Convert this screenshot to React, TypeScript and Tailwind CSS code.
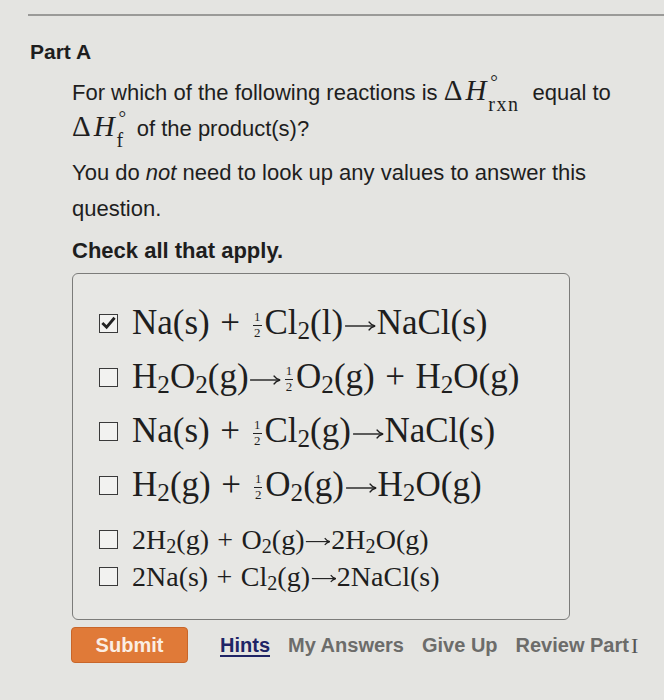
import React from "react";

const sans = { fontFamily: "'Liberation Sans', Arial, sans-serif" };
const serif = { fontFamily: "'Liberation Serif', 'Times New Roman', serif" };

const Sub = ({ children }: { children: React.ReactNode }) => (
  <sub className="text-[0.72em] relative top-[0.2em] align-baseline leading-none">{children}</sub>
);

const Half = () => (
  <span className="inline-flex flex-col items-center align-middle ml-[0.2em] mr-[0.22em] text-[0.37em] leading-none relative -top-[0.08em]">
    <span className="px-[1px]">1</span>
    <span className="w-full border-t border-[#222] my-[1px]" />
    <span className="px-[1px]">2</span>
  </span>
);

// long thin reaction arrow
const Arrow = () => (
  <svg viewBox="0 0 30 12" className="inline-block w-[0.92em] h-[0.4em] align-middle mx-[0.02em]">
    <path d="M1 6 H28" stroke="#1e1e1e" strokeWidth="1.3" />
    <path d="M23 2 Q25 5 29 6 Q25 7 23 10" fill="none" stroke="#1e1e1e" strokeWidth="1.3" />
  </svg>
);

const Plus = () => <span className="mx-[0.3em]">+</span>;

const Checkbox = ({ checked }: { checked?: boolean }) => (
  <span className="w-[19px] h-[19px] border-[1.5px] border-[#3a3a3a] bg-[#f2f2f0] flex items-center justify-center shrink-0">
    {checked && (
      <svg viewBox="0 0 16 16" className="w-[15px] h-[15px]">
        <path d="M2.5 8.5 L6 12 L13.5 3" fill="none" stroke="#222" strokeWidth="3" strokeLinecap="square" />
      </svg>
    )}
  </span>
);

// ΔH with a degree sign over a subscript; the scripts hang off a fixed-width slot
const DeltaH = ({ sub, w }: { sub: string; w: string }) => (
  <span style={serif} className="text-[29px] leading-none whitespace-nowrap">
    <span className="mr-[3px]">Δ</span>
    <i className="mr-[2px]">H</i>
    <span className={`relative inline-block h-[0.7em] ${w}`}>
      <span className="absolute left-[2px] -top-[8px] text-[19px] leading-none">°</span>
      <span className="absolute left-0 top-[14px] text-[20px] tracking-[1.5px] leading-none">{sub}</span>
    </span>
  </span>
);

const options: { el: React.ReactNode; big: boolean; checked?: boolean }[] = [
  {
    checked: true,
    big: true,
    el: (
      <>
        Na(s)<Plus />
        <Half />Cl<Sub>2</Sub>(l)<Arrow />NaCl(s)
      </>
    ),
  },
  {
    big: true,
    el: (
      <>
        H<Sub>2</Sub>O<Sub>2</Sub>(g)<Arrow />
        <Half />O<Sub>2</Sub>(g)<Plus />H<Sub>2</Sub>O(g)
      </>
    ),
  },
  {
    big: true,
    el: (
      <>
        Na(s)<Plus />
        <Half />Cl<Sub>2</Sub>(g)<Arrow />NaCl(s)
      </>
    ),
  },
  {
    big: true,
    el: (
      <>
        H<Sub>2</Sub>(g)<Plus />
        <Half />O<Sub>2</Sub>(g)<Arrow />H<Sub>2</Sub>O(g)
      </>
    ),
  },
  {
    big: false,
    el: (
      <>
        2H<Sub>2</Sub>(g)<Plus />O<Sub>2</Sub>(g)<Arrow />2H<Sub>2</Sub>O(g)
      </>
    ),
  },
  {
    big: false,
    el: (
      <>
        2Na(s)<Plus />Cl<Sub>2</Sub>(g)<Arrow />2NaCl(s)
      </>
    ),
  },
];

export default function App() {
  return (
    <div className="w-[664px] h-[700px] bg-[#e4e4e1] text-[#1e1e1e] overflow-hidden" style={sans}>
      <div className="pt-[14px] pl-[28px]">
        <div className="h-[2px] bg-[#9a9a98]" />
      </div>

      <div className="pl-[30px] pt-[24px]">
        <h2 className="text-[21px] font-bold leading-[24px]">Part A</h2>
      </div>

      <div className="pl-[72px] pr-[20px] pt-[11px] text-[22px] leading-[36px]">
        <p className="whitespace-nowrap">
          For which of the following reactions is <DeltaH sub="rxn" w="w-[38px]" /> equal to
          <br />
          <DeltaH sub="f" w="w-[14px]" /> of the product(s)?
        </p>

        <p className="mt-[8px]">
          You do <i>not</i> need to look up any values to answer this
          <br />
          question.
        </p>

        <p className="mt-[6px] font-bold">Check all that apply.</p>
      </div>

      <div className="ml-[72px] w-[498px] mt-[4px] border-[1.5px] border-[#7c7c7a] rounded-[6px] bg-[#e7e7e4] pl-[26px] pt-[22px] pb-[24px]">
        {options.map((o, i) => (
          <div
            key={i}
            className={`flex items-center gap-[14px] ${o.big ? "h-[54px] text-[35px]" : "h-[37px] text-[28px]"} ${i === 4 ? "mt-[9px]" : ""}`}
          >
            <Checkbox checked={o.checked} />
            <span style={serif} className="whitespace-nowrap leading-none">
              {o.el}
            </span>
          </div>
        ))}
      </div>

      <div className="ml-[71px] mt-[7px] flex items-center text-[20px] font-bold">
        <button className="w-[117px] h-[36px] rounded-[4px] bg-[#e07a38] border border-[#c8662a] text-[#fbeee4]">
          Submit
        </button>
        <span className="ml-[32px] text-[#1f2466] underline underline-offset-[3px] decoration-2">Hints</span>
        <span className="ml-[18px] text-[#6c6c6a]">My Answers</span>
        <span className="ml-[18px] text-[#6c6c6a]">Give Up</span>
        <span className="ml-[18px] text-[#6c6c6a]">Review Part</span>
        <span className="ml-[2px] text-[#555] font-normal text-[22px]" style={serif}>I</span>
      </div>
    </div>
  );
}
